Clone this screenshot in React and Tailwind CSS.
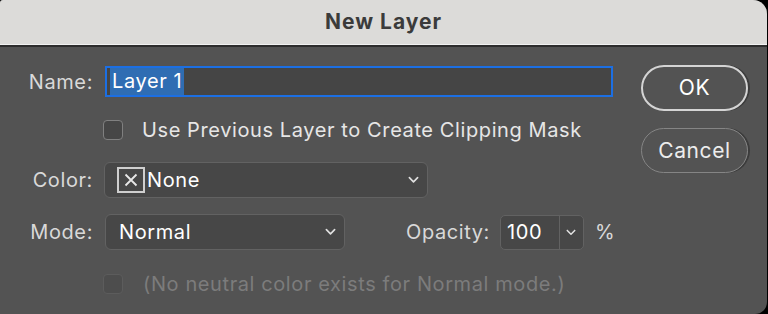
import React from 'react';

function Chevron({ className = '' }) {
  return (
    <svg viewBox="0 0 12 8" className={className} fill="none">
      <polyline points="1.5,1.5 6,6 10.5,1.5" stroke="#e0e0e0" strokeWidth="1.8" strokeLinecap="round" strokeLinejoin="round" />
    </svg>
  );
}

function Checkbox({ disabled }) {
  return (
    <div
      className={
        disabled
          ? 'w-[20px] h-[20px] rounded-[4px] border border-[#5c5c5c] bg-[#4d4d4d]'
          : 'w-[20px] h-[20px] rounded-[4px] border-[1.5px] border-[#808080] bg-[#464646]'
      }
    />
  );
}

function Label({ children }) {
  return <div className="w-[93px] text-right text-[#d9d9d9] shrink-0">{children}</div>;
}

export default function App() {
  return (
    <div
      className="w-[768px] h-[314px] bg-black overflow-hidden"
      style={{ fontFamily: 'Inter, "Open Sans", "Liberation Sans", sans-serif' }}
    >
      <div className="w-[767px] h-[314px] bg-[#535353] rounded-tl-[3px] rounded-tr-[14px] rounded-br-[12px] overflow-hidden flex flex-col">
        {/* title bar */}
        <div className="h-[45px] bg-[#dcdbd9] flex items-center justify-center border-b border-[#f2f2f2]">
          <span className="text-[21px] font-bold text-[#3b3b3b] tracking-[1px]">New Layer</span>
        </div>
        <div className="h-[2px] bg-[#2d2d2d]" />

        <div className="flex flex-1 text-[20px] tracking-[0.6px] text-[#ececec]">
          {/* form */}
          <div className="w-[641px] flex flex-col">
            <div className="flex items-center h-[31px] mt-[19px]">
              <Label>Name:</Label>
              <div className="ml-[12px] w-[508px] h-[31px] border-2 border-[#1c6fe3] bg-[#454545] flex items-center pl-[3px]">
                <span className="bg-[#2f6db3] text-white h-[27px] leading-[27px] px-[2px]">Layer 1</span>
              </div>
            </div>

            <div className="flex items-center h-[20px] mt-[23px] pl-[103px]">
              <Checkbox />
              <span className="ml-[19px] text-[#e6e6e6]">Use Previous Layer to Create Clipping Mask</span>
            </div>

            <div className="flex items-center h-[36px] mt-[22px]">
              <Label>Color:</Label>
              <div className="ml-[11px] w-[324px] h-[36px] rounded-[6px] border border-[#626262] bg-[#474747] flex items-center pl-[12px] pr-[8px]">
                <div className="w-[28px] h-[26px] border-2 border-[#cfcfcf] flex items-center justify-center">
                  <svg viewBox="0 0 14 14" className="w-[14px] h-[14px]">
                    <path d="M1.5 1.5 L12.5 12.5 M12.5 1.5 L1.5 12.5" stroke="#e8e8e8" strokeWidth="1.8" />
                  </svg>
                </div>
                <span className="ml-[2px] text-white">None</span>
                <Chevron className="ml-auto w-[11px] h-[8px]" />
              </div>
            </div>

            <div className="flex items-center h-[36px] mt-[16px]">
              <Label>Mode:</Label>
              <div className="ml-[12px] w-[240px] h-[36px] rounded-[6px] border border-[#626262] bg-[#474747] flex items-center pl-[13px] pr-[8px]">
                <span className="text-white">Normal</span>
                <Chevron className="ml-auto w-[11px] h-[8px]" />
              </div>
              <span className="ml-[61px] text-[#d9d9d9]">Opacity:</span>
              <div className="ml-[10px] w-[84px] h-[35px] rounded-[5px] border border-[#626262] bg-[#474747] flex">
                <div className="w-[58px] flex items-center pl-[6px] text-white">100</div>
                <div className="flex-1 border-l border-[#626262] flex items-center justify-center">
                  <Chevron className="w-[10px] h-[7px]" />
                </div>
              </div>
              <span className="ml-[11px] text-[#d9d9d9]">%</span>
            </div>

            <div className="flex items-center h-[20px] mt-[24px] pl-[103px]">
              <Checkbox disabled />
              <span className="ml-[20px] text-[#7c7c7c]">(No neutral color exists for Normal mode.)</span>
            </div>
          </div>

          {/* buttons */}
          <div className="flex flex-col pt-[18px]">
            <button className="w-[107px] h-[46px] rounded-full border-2 border-[#d4d4d4] text-white text-[21px] tracking-[0.6px] shadow-[2px_0_0_#3c3c3c]">
              OK
            </button>
            <button className="mt-[17px] w-[107px] h-[45px] rounded-full border-[1.5px] border-[#858585] text-[#ececec] text-[21px] tracking-[0.6px] shadow-[2px_0_0_#3c3c3c]">
              Cancel
            </button>
          </div>
        </div>
      </div>
    </div>
  );
}
